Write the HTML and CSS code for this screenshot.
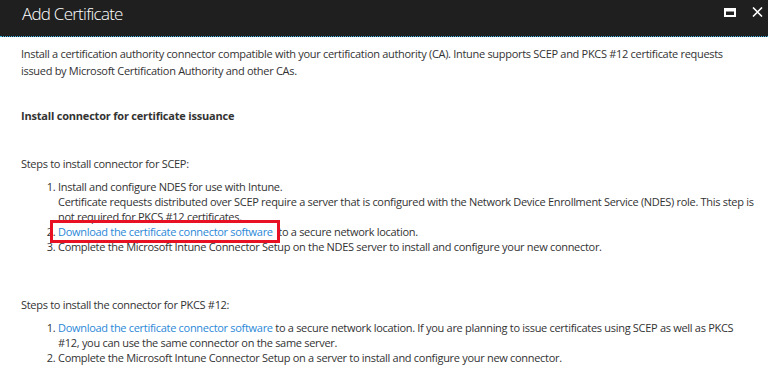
FILE: index.html
```html
<!DOCTYPE html>
<html>
<head>
<meta charset="utf-8">
<link rel="stylesheet" href="styles.css">
</head>
<body>
<div class="blade">
  <header class="bar">
    <h1 class="title">Add Certificate</h1>
    <div class="controls">
      <svg class="ico" width="12" height="9" viewBox="0 0 12 9"><rect x="1" y="1" width="10" height="7" fill="none" stroke="#fff" stroke-width="2"/><rect x="1" y="1" width="10" height="2.5" fill="#fff"/></svg>
      <svg class="ico" width="11" height="10" viewBox="0 0 11 10"><path d="M1 0.5L10 9.5M10 0.5L1 9.5" stroke="#fff" stroke-width="1.6"/></svg>
    </div>
  </header>
  <main class="content">
    <p class="intro">Install a certification authority connector compatible with your certification authority (CA). Intune supports SCEP and PKCS #12 certificate requests<br>issued by Microsoft Certification Authority and other CAs.</p>
    <p class="heading">Install connector for certificate issuance</p>
    <p class="steps">Steps to install connector for SCEP:</p>
    <ol class="list">
      <li>Install and configure NDES for use with Intune.<br>Certificate requests distributed over SCEP require a server that is configured with the Network Device Enrollment Service (NDES) role. This step is<br>not required for PKCS #12 certificates.</li>
      <li><span class="hl"><a class="link" href="#">Download the certificate connector software</a></span> to a secure network location.</li>
      <li>Complete the Microsoft Intune Connector Setup on the NDES server to install and configure your new connector.</li>
    </ol>
    <p class="steps second">Steps to install the connector for PKCS #12:</p>
    <ol class="list">
      <li><a class="link" href="#">Download the certificate connector software</a> to a secure network location. If you are planning to issue certificates using SCEP as well as PKCS<br>#12, you can use the same connector on the same server.</li>
      <li>Complete the Microsoft Intune Connector Setup on a server to install and configure your new connector.</li>
    </ol>
  </main>
</div>
</body>
</html>
```

FILE: styles.css
```css
* { box-sizing: border-box; }
html, body { margin: 0; padding: 0; background: #fff; }
body { font-family: "Open Sans", "Noto Sans", sans-serif; color: #333; width: 768px; height: 387px; overflow: hidden; }
.bar {
  height: 37px;
  background: #1f1f1f;
  border-bottom: 1px dotted #3fb4e4;
  display: flex;
  align-items: flex-start;
  justify-content: space-between;
  padding: 2px 5px 0 22px;
}
.title { margin: 0; font-size: 17px; line-height: 24px; font-weight: 300; color: #fff; letter-spacing: -0.75px; }
.controls { display: flex; align-items: center; gap: 16px; padding-top: 5px; }
.ico { display: block; }
.content { padding: 8px 0 0 21px; font-size: 11px; letter-spacing: -0.3px; white-space: nowrap; }
p { margin: 0; }
.intro { line-height: 17px; }
.heading { font-weight: 700; margin-top: 28px; line-height: 17px; letter-spacing: -0.2px; }
.steps { margin-top: 31px; line-height: 17px; }
.steps.second { margin-top: 42px; }
.list { margin: 7px 0 0; padding-left: 37px; line-height: 15px; }
.link { color: #2b88d8; text-decoration: none; }
.hl { outline: 3px solid #e81123; outline-offset: 1px; padding: 0 3px 0 4px; margin-left: -4px; }
```
